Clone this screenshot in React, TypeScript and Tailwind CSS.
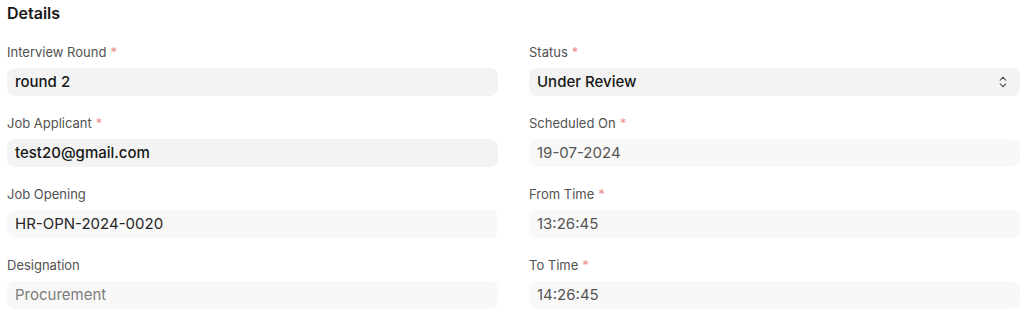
import { ChevronsUpDown } from "lucide-react";

type Field = {
  label: string;
  value: string;
  required?: boolean;
  kind: "edit" | "link" | "read" | "muted" | "select";
};

const left: Field[] = [
  { label: "Interview Round", value: "round 2", required: true, kind: "edit" },
  { label: "Job Applicant", value: "test20@gmail.com", required: true, kind: "edit" },
  { label: "Job Opening", value: "HR-OPN-2024-0020", kind: "link" },
  { label: "Designation", value: "Procurement", kind: "muted" },
];

const right: Field[] = [
  { label: "Status", value: "Under Review", required: true, kind: "select" },
  { label: "Scheduled On", value: "19-07-2024", required: true, kind: "read" },
  { label: "From Time", value: "13:26:45", required: true, kind: "read" },
  { label: "To Time", value: "14:26:45", required: true, kind: "read" },
];

function FieldBox({ field }: { field: Field }) {
  const editable = field.kind === "edit" || field.kind === "select";
  return (
    <div className="flex flex-col">
      <label className="text-[13px] leading-4 text-[#525252] mb-2">
        {field.label}
        {field.required && <span className="text-[#f08c8c] ml-1">*</span>}
      </label>
      <div
        className={
          "h-7 rounded-lg px-2 flex items-center justify-between text-[15px] " +
          (editable ? "bg-[#f3f3f3] text-[#171717] font-medium" : "bg-[#f8f8f8]") +
          (field.kind === "link" ? " text-[#262626]" : "") +
          (field.kind === "read" ? " text-[#555555]" : "") +
          (field.kind === "muted" ? " text-[#7c7c7c]" : "")
        }
      >
        <span>{field.value}</span>
        {field.kind === "select" && (
          <ChevronsUpDown size={14} strokeWidth={1.75} className="text-[#383838] mr-0.5" />
        )}
      </div>
    </div>
  );
}

export default function App() {
  return (
    <div
      className="w-[1024px] h-[316px] bg-white pl-[7px] pr-[4px] pt-px overflow-hidden"
      style={{ fontFamily: "Inter, 'Noto Sans', sans-serif" }}
    >
      {/* HEADER */}
      <h2 className="text-base leading-6 font-semibold text-[#171717]">Details</h2>

      {/* FIELDS */}
      <div className="mt-[19px] grid grid-cols-2 gap-x-[31px]">
        <div className="flex flex-col gap-[19px]">
          {left.map((f) => (
            <FieldBox key={f.label} field={f} />
          ))}
        </div>
        <div className="flex flex-col gap-[19px]">
          {right.map((f) => (
            <FieldBox key={f.label} field={f} />
          ))}
        </div>
      </div>
    </div>
  );
}
